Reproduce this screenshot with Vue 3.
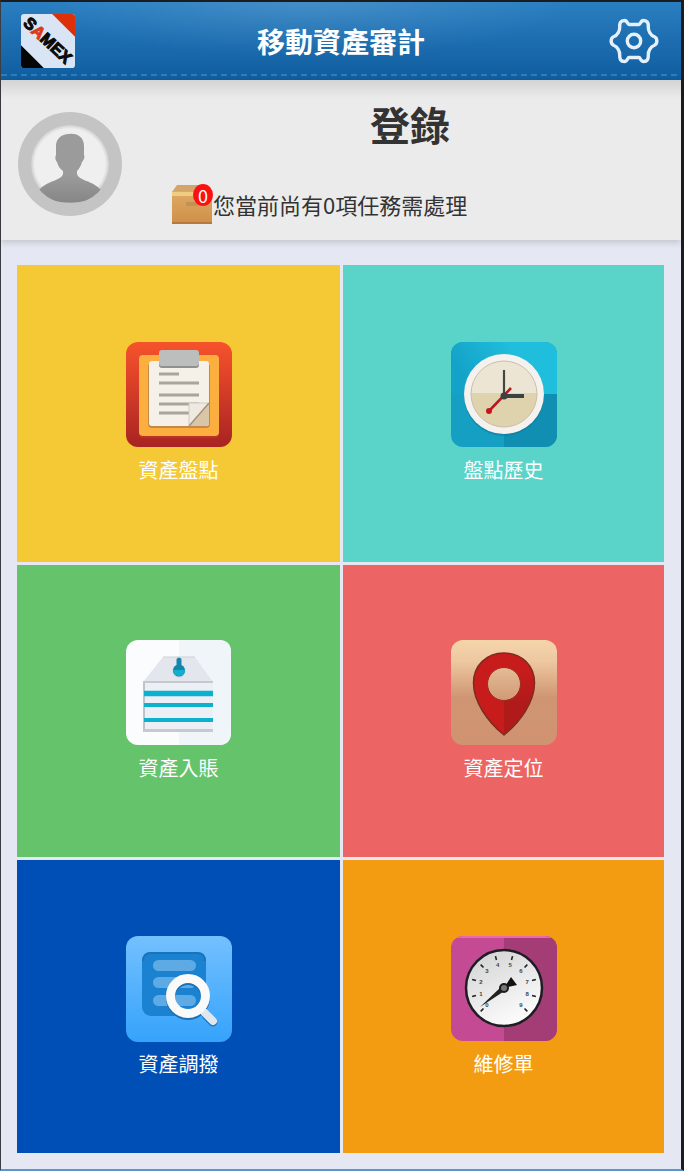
<script setup>
import { ref } from 'vue'

const taskCount = ref(0)

const tiles = [
  { id: 'check', label: '資產盤點', color: '#f4c935' },
  { id: 'history', label: '盤點歷史', color: '#5ad3c9' },
  { id: 'entry', label: '資產入賬', color: '#65c36b' },
  { id: 'locate', label: '資產定位', color: '#ec6464' },
  { id: 'transfer', label: '資產調撥', color: '#004fb6' },
  { id: 'repair', label: '維修單', color: '#f39c12' },
]

// gauge marks 0-9, spread over 270 degrees
const marks = Array.from({ length: 10 }, (_, i) => {
  const a = ((135 + i * 30) * Math.PI) / 180
  const at = (r) => [53 + Math.cos(a) * r, 52 + Math.sin(a) * r]
  const [x1, y1] = at(33)
  const [x2, y2] = at(29)
  const [tx, ty] = at(24)
  return { n: i, x1, y1, x2, y2, tx, ty: ty + 2 }
})
</script>

<template>
  <div class="screen">
    <header class="topbar">
      <svg class="logo" viewBox="0 0 52 52" role="img" aria-label="SAMEX">
        <defs>
          <clipPath id="logo-clip"><rect width="52" height="52" rx="3" /></clipPath>
        </defs>
        <g clip-path="url(#logo-clip)">
          <rect width="52" height="52" fill="#d9e5f5" />
          <path d="M30 0H52V22Z" fill="#dd2f08" />
          <path d="M0 30V52H22Z" fill="#050505" />
        </g>
        <text class="logo-text" x="26" y="31" transform="rotate(43 26 25)">S<tspan class="logo-red">A</tspan>MEX</text>
      </svg>
      <h1 class="title">移動資產審計</h1>
      <button class="settings" type="button" aria-label="設定">
        <svg viewBox="-25 -25 50 50" fill="none" stroke="#e4f0fb" stroke-width="3.400" stroke-linejoin="round">
          <path d="M-5 -16.500H5C6.500 -16.500 6.500 -20.500 9.500 -20.500C13.500 -20.500 14.500 -18 14.300 -14C14 -10 17 -5.500 20 -4.500C23.800 -3 23.800 3 20 4.500C17 5.500 14 10 14.300 14C14.500 18 13.500 20.500 9.500 20.500C6.500 20.500 6.500 16.500 5 16.500H-5C-6.500 16.500 -6.500 20.500 -9.500 20.500C-13.500 20.500 -14.500 18 -14.300 14C-14 10 -17 5.500 -20 4.500C-23.800 3 -23.800 -3 -20 -4.500C-17 -5.500 -14 -10 -14.300 -14C-14.500 -18 -13.500 -20.500 -9.500 -20.500C-6.500 -20.500 -6.500 -16.500 -5 -16.500Z" />
          <circle r="6.700" />
        </svg>
      </button>
    </header>

    <section class="profile">
      <svg class="avatar" viewBox="0 0 104 104" aria-hidden="true">
        <defs>
          <radialGradient id="avatar-bg">
            <stop offset="0.900" stop-color="#efefef" />
            <stop offset="1" stop-color="#d0d0d0" />
          </radialGradient>
          <linearGradient id="avatar-man" x1="0" y1="0" x2="0" y2="1">
            <stop offset="0.600" stop-color="#9b9b9b" />
            <stop offset="1" stop-color="#868686" />
          </linearGradient>
          <clipPath id="avatar-clip"><circle cx="52" cy="52" r="40" /></clipPath>
        </defs>
        <circle cx="52" cy="52" r="52" fill="#c4c4c4" />
        <circle cx="52" cy="52" r="39" fill="url(#avatar-bg)" />
        <path
          clip-path="url(#avatar-clip)"
          fill="url(#avatar-man)"
          d="M51 22C60 21 66 26 66 34V43C67 45 66 48 64 50C63 54 61 57 59 59V62C61 69 74 68 83 78C74 95 30 95 21 78C30 68 43 69 45 62V59C42 57 40 54 39 50C37 48 37 45 38 43V34C38 27 43 22 51 22Z"
        />
      </svg>
      <div class="profile-body">
        <button class="login" type="button">登錄</button>
        <p class="tasks">
          <span class="parcel">
            <svg viewBox="0 0 40 40" aria-hidden="true">
              <defs>
                <linearGradient id="parcel-bg" x1="0" y1="0" x2="0" y2="1">
                  <stop offset="0" stop-color="#deaa65" />
                  <stop offset="1" stop-color="#cf8f48" />
                </linearGradient>
              </defs>
              <path d="M5 1H35L40 8H0Z" fill="#d4a469" />
              <rect y="7" width="40" height="33" rx="1" fill="url(#parcel-bg)" />
              <rect y="8" width="40" height="4" fill="#f0cd83" />
              <rect y="38" width="40" height="2" fill="#b67b3c" />
              <rect x="14" y="18" width="12" height="4" fill="#c29255" />
            </svg>
            <span class="badge">{{ taskCount }}</span>
          </span>
          <span>您當前尚有{{ taskCount }}項任務需處理</span>
        </p>
      </div>
    </section>

    <main class="tiles">
      <button
        v-for="tile in tiles"
        :key="tile.id"
        class="tile"
        type="button"
        :style="{ background: tile.color }"
      >
        <!-- clipboard -->
        <svg v-if="tile.id === 'check'" class="icon" viewBox="0 0 106 106">
          <defs>
            <linearGradient id="check-bg" x1="0" y1="0" x2="0" y2="1">
              <stop offset="0" stop-color="#f5532b" />
              <stop offset="0.300" stop-color="#e24429" />
              <stop offset="1" stop-color="#a82322" />
            </linearGradient>
          </defs>
          <rect width="106" height="105" rx="12" fill="url(#check-bg)" />
          <rect x="13" y="14" width="80" height="82" rx="4" fill="#bd3322" />
          <rect x="13" y="13" width="80" height="81" rx="4" fill="#fcaf3f" />
          <rect x="22" y="21" width="62" height="65" rx="4" fill="#c4894a" />
          <rect x="23" y="19" width="60" height="65" rx="3" fill="#f5f1e8" />
          <rect x="33" y="12" width="40" height="14" rx="3" fill="#8f9090" />
          <rect x="33" y="8" width="40" height="16" rx="3" fill="#bcbdbd" />
          <path d="M33 32H53M33 41H73M33 53H73M33 62H73M33 71H63" stroke="#a9a49c" stroke-width="3" />
          <path d="M83 61V81Q83 84 80 84H63Z" fill="#d9c6a8" />
          <path d="M63 61H83L63 84Z" fill="#eeeae2" />
          <path d="M63 83V61H82" fill="none" stroke="#cfcac1" />
          <path d="M83 61L63 84" stroke="#a3927a" stroke-width="1.500" />
        </svg>

        <!-- clock -->
        <svg v-else-if="tile.id === 'history'" class="icon" viewBox="0 0 106 106">
          <defs>
            <clipPath id="clock-bg"><rect width="106" height="105" rx="12" /></clipPath>
            <clipPath id="clock-face"><circle cx="53" cy="52" r="33" /></clipPath>
            <linearGradient id="clock-left" x1="0" y1="0.300" x2="1" y2="0">
              <stop offset="0" stop-color="#14a3c8" />
              <stop offset="0.600" stop-color="#20bedd" />
            </linearGradient>
          </defs>
          <g clip-path="url(#clock-bg)">
            <rect width="106" height="105" fill="#159fc2" />
            <rect width="106" height="52" fill="url(#clock-left)" />
            <path d="M53 52H106V105H53Z" fill="#108fb2" />
          </g>
          <circle cx="53" cy="54" r="40" fill="#0d7795" opacity="0.500" />
          <circle cx="53" cy="52" r="40" fill="#f4f1ef" />
          <g clip-path="url(#clock-face)">
            <rect x="19" y="18" width="68" height="34" fill="#ece5d3" />
            <rect x="19" y="51" width="68" height="36" fill="#ded3ad" />
          </g>
          <circle cx="53" cy="52" r="33" fill="none" stroke="#c9bfa9" />
          <path d="M53 54V28" stroke="#454545" stroke-width="2.200" />
          <path d="M53 54H73" stroke="#3b4242" stroke-width="4" />
          <path d="M60 46L38 69" stroke="#b91822" stroke-width="2.600" />
          <circle cx="38" cy="69" r="3" fill="#c5161e" />
          <circle cx="53" cy="54" r="3.500" fill="#3b4040" />
        </svg>

        <!-- price tag slip -->
        <svg v-else-if="tile.id === 'entry'" class="icon" viewBox="0 0 106 106">
          <rect width="105" height="105" rx="12" fill="#fbfcfd" />
          <path d="M53 0H93Q105 0 105 12V93Q105 105 93 105H53Z" fill="#f0f5f9" />
          <path d="M37 17H69L87 42H17Z" fill="#e3e6ec" />
          <path d="M37 17H69" stroke="#cdd1d6" />
          <rect x="17" y="42" width="70" height="49" fill="#eceff5" />
          <rect x="17" y="41" width="70" height="2" fill="#c5c9ce" />
          <rect x="17" y="89" width="70" height="3" fill="#c6cacd" />
          <path d="M18 43V90" stroke="#bec3c8" stroke-width="2" />
          <path d="M18 53.500H87" stroke="#0bb1cd" stroke-width="5.500" />
          <path d="M18 65H87M18 80H87" stroke="#0bb1cd" stroke-width="4.200" />
          <circle cx="53" cy="31" r="6.500" fill="#c9ced5" />
          <path d="M50.500 19Q53 16 55.500 19V25A6 6 0 1 1 50.500 25Z" fill="#1287aa" />
          <path d="M47 30H59A6 6 0 0 1 47 30Z" fill="#12aed0" />
        </svg>

        <!-- map pin -->
        <svg v-else-if="tile.id === 'locate'" class="icon" viewBox="0 0 106 106">
          <defs>
            <linearGradient id="pin-bg" x1="0" y1="0" x2="0" y2="1">
              <stop offset="0" stop-color="#f6d5aa" />
              <stop offset="0.200" stop-color="#edc8a0" />
              <stop offset="0.550" stop-color="#cf9573" />
              <stop offset="1" stop-color="#d09372" />
            </linearGradient>
            <linearGradient id="pin-hole" x1="0" y1="0" x2="0" y2="1">
              <stop offset="0" stop-color="#e5bb95" />
              <stop offset="1" stop-color="#d09a76" />
            </linearGradient>
            <linearGradient id="pin-shade" x1="0" y1="0" x2="0" y2="1">
              <stop offset="0.200" stop-color="#c81c1c" />
              <stop offset="0.600" stop-color="#b01b19" />
            </linearGradient>
          </defs>
          <rect width="106" height="105" rx="12" fill="url(#pin-bg)" />
          <path d="M53 13C71 13 83.500 26 83.500 43C83.500 62 69 82 53 95C37 82 22.500 62 22.500 43C22.500 26 35 13 53 13Z" fill="#c81c1c" stroke="#7d2b20" stroke-width="1.500" />
          <path d="M53 14C70 14 82.500 26 82.500 43C82.500 62 69 81 53 94Z" fill="url(#pin-shade)" />
          <circle cx="53" cy="44" r="16.500" fill="url(#pin-hole)" stroke="#a02a20" />
        </svg>

        <!-- document search -->
        <svg v-else-if="tile.id === 'transfer'" class="icon" viewBox="0 0 106 106">
          <defs>
            <linearGradient id="search-bg" x1="0" y1="0" x2="0" y2="1">
              <stop offset="0" stop-color="#74c0ff" />
              <stop offset="1" stop-color="#35a3fb" />
            </linearGradient>
          </defs>
          <rect width="106" height="106" rx="12" fill="url(#search-bg)" />
          <rect x="16" y="16" width="64" height="64" rx="9" fill="#1b82d1" />
          <path d="M17 25Q17 17 25 17H71Q79 17 79 25" fill="none" stroke="#1973ba" stroke-width="2" />
          <g fill="#5eaae4">
            <rect x="27" y="24" width="43" height="11" rx="5.500" />
            <rect x="27" y="41" width="43" height="11" rx="5.500" />
            <rect x="27" y="59" width="43" height="11" rx="5.500" />
          </g>
          <path d="M80 79L87 86" stroke="#1f78bf" stroke-width="9" stroke-linecap="round" />
          <circle cx="62" cy="62" r="17.500" fill="none" stroke="#1c70b4" stroke-width="9" />
          <path d="M79 77L87 85" stroke="#dfe6ec" stroke-width="8" stroke-linecap="round" />
          <circle cx="62" cy="60" r="17.500" fill="none" stroke="#fafafa" stroke-width="9" />
        </svg>

        <!-- gauge -->
        <svg v-else class="icon" viewBox="0 0 106 106">
          <defs>
            <clipPath id="gauge-clip"><rect width="106" height="105" rx="12" /></clipPath>
            <linearGradient id="gauge-face" x1="0" y1="0" x2="0.500" y2="1">
              <stop offset="0" stop-color="#cfd0d0" />
              <stop offset="0.500" stop-color="#e6e6e6" />
              <stop offset="1" stop-color="#fbfbfb" />
            </linearGradient>
          </defs>
          <g clip-path="url(#gauge-clip)">
            <rect width="106" height="105" fill="#c54a94" />
            <rect x="53" width="53" height="105" fill="#a43c76" />
            <rect width="106" height="2" fill="#ee66b0" />
          </g>
          <circle cx="53" cy="52" r="38" fill="url(#gauge-face)" stroke="#1d1d22" stroke-width="2.500" />
          <g v-for="m in marks" :key="m.n">
            <line :x1="m.x1" :y1="m.y1" :x2="m.x2" :y2="m.y2" stroke="#222" stroke-width="1.600" />
            <text class="mark" :x="m.tx" :y="m.ty">{{ m.n }}</text>
          </g>
          <path d="M29 71L51 50L55 54Z" fill="#222" />
          <path d="M53 52L60 41L66 49Z" fill="#111" />
          <circle cx="53" cy="52" r="4" fill="#777" stroke="#1b1b1b" stroke-width="2" />
        </svg>

        <span class="label">{{ tile.label }}</span>
      </button>
    </main>
  </div>
</template>

<style>
body {
  margin: 0;
  background: #e5e8f2;
}
</style>

<style scoped>
.screen {
  box-sizing: border-box;
  min-height: 100vh;
  display: flex;
  flex-direction: column;
  background: #e5e8f2;
  border-style: solid;
  border-width: 2px 3px 2px 1px;
  border-color: #1b1c20 #1b1c20 #5b95d0 #3c3d42;
  font-family: 'Noto Sans CJK TC', sans-serif;
}

button {
  margin: 0;
  padding: 0;
  border: 0;
  background: none;
  font-family: inherit;
  cursor: pointer;
}

svg {
  display: block;
}

.topbar {
  box-sizing: border-box;
  height: 78px;
  padding: 0 20px;
  display: flex;
  align-items: center;
  justify-content: space-between;
  background:
    repeating-linear-gradient(90deg, #2f7cb8 0 6px, transparent 6px 10px) 0 72px / 100% 2px no-repeat,
    radial-gradient(ellipse at 45% 0, rgba(255, 255, 255, 0.12), transparent 50%),
    linear-gradient(#2a7fc1, #1c6db0 50%, #0f5d9f);
}

.logo {
  width: 54px;
  height: 54px;
  overflow: visible;
}

.logo-text {
  font-family: 'Liberation Sans', Arial, sans-serif;
  font-size: 16px;
  font-weight: 700;
  text-anchor: middle;
  fill: #0a0a0a;
  stroke: #0a0a0a;
  stroke-width: 1px;
}

.logo-red {
  fill: #dd3a1c;
  stroke: #dd3a1c;
}

.title {
  margin: 0;
  font-size: 28px;
  line-height: 40px;
  font-weight: 700;
  color: #fff;
}

.settings {
  width: 54px;
  height: 50px;
}

.settings svg {
  width: 50px;
  height: 50px;
  margin: 0 auto;
}

.profile {
  padding: 24px 0 16px 17px;
  display: flex;
  gap: 17px;
  align-items: center;
  background: linear-gradient(#d3d3d3, #ebebeb 18px);
  box-shadow: 0 3px 6px rgba(0, 0, 0, 0.14);
}

.avatar {
  flex: none;
  width: 104px;
  height: 104px;
}

.profile-body {
  flex: 1;
  display: flex;
  flex-direction: column;
  align-items: center;
  gap: 40px;
}

.login {
  font-size: 40px;
  line-height: 40px;
  font-weight: 700;
  color: #333;
}

.tasks {
  box-sizing: border-box;
  width: 100%;
  margin: 0;
  padding-left: 33px;
  display: flex;
  align-items: center;
  font-size: 22px;
  line-height: 40px;
  color: #333;
}

.parcel {
  position: relative;
  width: 41px;
}

.parcel svg {
  width: 40px;
  height: 40px;
}

.badge {
  position: absolute;
  top: 0;
  right: 0;
  width: 20px;
  height: 22px;
  border-radius: 50%;
  background: #fb1111;
  color: #fff;
  font-size: 18px;
  line-height: 22px;
  text-align: center;
}

.tiles {
  flex: 1;
  padding: 25px 17px 16px 16px;
  display: grid;
  grid-template-columns: 323fr 321fr;
  grid-template-rows: 297fr 293fr 293fr;
  gap: 3px;
}

.tile {
  padding: 24px 0;
  display: flex;
  flex-direction: column;
  align-items: center;
  justify-content: center;
  gap: 8px;
  color: #fff;
}

.icon {
  width: 106px;
  height: 106px;
}

.label {
  font-size: 20px;
  line-height: 28px;
}

.mark {
  font-family: 'Liberation Sans', Arial, sans-serif;
  font-size: 6px;
  font-weight: 700;
  text-anchor: middle;
  fill: #444;
}
</style>
